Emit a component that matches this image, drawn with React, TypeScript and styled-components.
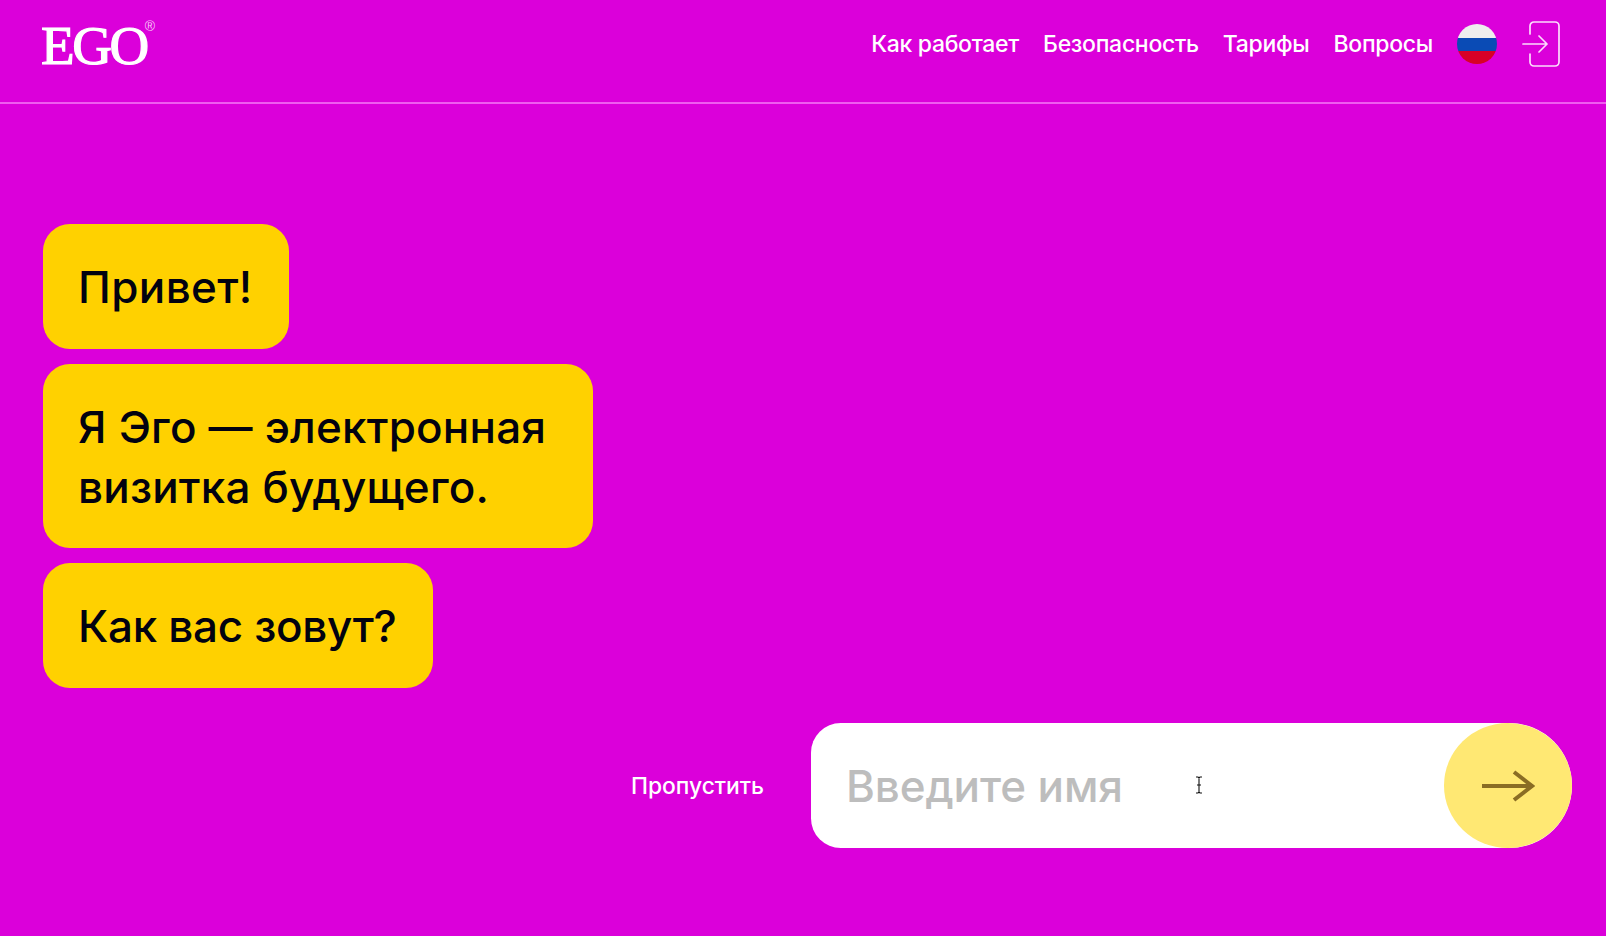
import React from "react";
import styled, { createGlobalStyle } from "styled-components";

const Global = createGlobalStyle`
  html, body { margin: 0; padding: 0; height: 100%; background: #db00da; overflow: hidden; }
  * { box-sizing: border-box; }
`;
const Page = styled.div`
  width: 1606px; height: 936px; background: #db00da; display: flex; flex-direction: column;
  font-family: Inter, "Noto Sans", sans-serif;
`;
const Header = styled.header`
  height: 104px; flex: none; display: flex; align-items: center; justify-content: space-between;
  padding: 0 46px 14px 41px; border-bottom: 2px solid #ef5cef;
`;
const Logo = styled.div`
  display: flex; align-items: flex-start; margin-top: 3px; color: #fff;
`;
const LogoWord = styled.span`
  font-family: "Liberation Serif", serif; font-weight: 400; -webkit-text-stroke: 1.2px #fff;
  font-size: 55px; line-height: 56px; letter-spacing: -2.4px;
`;
const Reg = styled.span`
  font-family: "Liberation Sans", sans-serif; font-size: 14px; line-height: 14px; margin-top: 1px; margin-left: -2px; color: #f7c2f7;
`;
const Nav = styled.nav`display: flex; align-items: center; gap: 24px;`;
const NavLink = styled.a`color: #fff; font-size: 23px; line-height: 28px; letter-spacing: -0.3px; font-weight: 500; white-space: nowrap;`;
const FlagBox = styled.svg`width: 40px; height: 40px; display: block; flex: none;`;
const DoorBox = styled.svg`width: 38px; height: 46px; display: block; flex: none; margin-left: 1px;`;
const Main = styled.main`flex: 1; display: flex; flex-direction: column; padding: 120px 34px 0 43px;`;
const Thread = styled.div`display: flex; flex-direction: column; align-items: flex-start; gap: 15px;`;
const Bubble = styled.div<{ $width: number; $tracking: number }>`
  width: ${(p) => p.$width}px; letter-spacing: ${(p) => p.$tracking}px;
  background: #ffd100; color: #020210; border-radius: 27px; padding: 33px 0 31.5px 35px; font-size: 44px; line-height: 60px;
  font-weight: 500; white-space: pre-line;
`;
const Answer = styled.div`display: flex; justify-content: flex-end; align-items: center; gap: 47px; margin-top: 35.5px;`;
const Skip = styled.a`color: #fff; font-size: 22.8px; line-height: 28px; letter-spacing: 0; font-weight: 500; white-space: nowrap;`;
const Field = styled.label`
  position: relative; width: 761px; height: 125px; background: #fff; border-radius: 30px 63px 63px 30px;
  display: flex; align-items: center; justify-content: space-between; padding-left: 35px;
`;
const Placeholder = styled.span`color: #bdbdbd; font-size: 44px; line-height: 60px; letter-spacing: -0.1px; font-weight: 500;`;
const Send = styled.button`
  width: 128px; height: 125px; border: 0; padding: 0; border-radius: 50%; background: #ffe873;
  display: flex; align-items: center; justify-content: center;
`;
const ArrowIcon = styled.svg`width: 54px; height: 34px; display: block;`;
const Caret = styled.svg`position: absolute; left: 383px; top: 53px; width: 10px; height: 18px;`;

export default function App() {
  return (
    <Page>
      <Global />
      <Header>
        <Logo><LogoWord>EGO</LogoWord><Reg>®</Reg></Logo>
        <Nav>
          <NavLink>Как работает</NavLink>
          <NavLink>Безопасность</NavLink>
          <NavLink>Тарифы</NavLink>
          <NavLink>Вопросы</NavLink>
          <FlagBox viewBox="0 0 40 40">
            <defs><clipPath id="c"><circle cx="20" cy="20" r="20" /></clipPath></defs>
            <g clipPath="url(#c)">
              <rect width="40" height="14" fill="#eeeeee" />
              <rect y="14" width="40" height="13" fill="#0a4bb5" />
              <rect y="27" width="40" height="13" fill="#d80027" />
            </g>
          </FlagBox>
          <DoorBox viewBox="0 0 38 46" fill="none" stroke="#fcdcfc" strokeWidth="1.7" strokeLinecap="round" strokeLinejoin="round">
            <path d="M8 13V5a4 4 0 0 1 4-4h21a4 4 0 0 1 4 4v36a4 4 0 0 1-4 4H12a4 4 0 0 1-4-4v-8" />
            <path d="M1 23h24M17 15l8 8-8 8" />
          </DoorBox>
        </Nav>
      </Header>
      <Main>
        <Thread>
          <Bubble $width={246} $tracking={0.4}>Привет!</Bubble>
          <Bubble $width={550} $tracking={0.2}>{"Я Эго — электронная\nвизитка будущего."}</Bubble>
          <Bubble $width={390} $tracking={-0.3}>Как вас зовут?</Bubble>
        </Thread>
        <Answer>
          <Skip>Пропустить</Skip>
          <Field>
            <Placeholder>Введите имя</Placeholder>
            <Caret viewBox="0 0 10 18" fill="none" stroke="#111" strokeWidth="1.1"><path d="M2 1h2l1 1 1-1h2M5 2v14M2 17h2l1-1 1 1h2M3 9h4" /></Caret>
            <Send>
              <ArrowIcon viewBox="0 0 54 34" fill="none" stroke="#8a6d24" strokeWidth="4"><path d="M1 17h50M33 3l18 14-18 14" /></ArrowIcon>
            </Send>
          </Field>
        </Answer>
      </Main>
    </Page>
  );
}
